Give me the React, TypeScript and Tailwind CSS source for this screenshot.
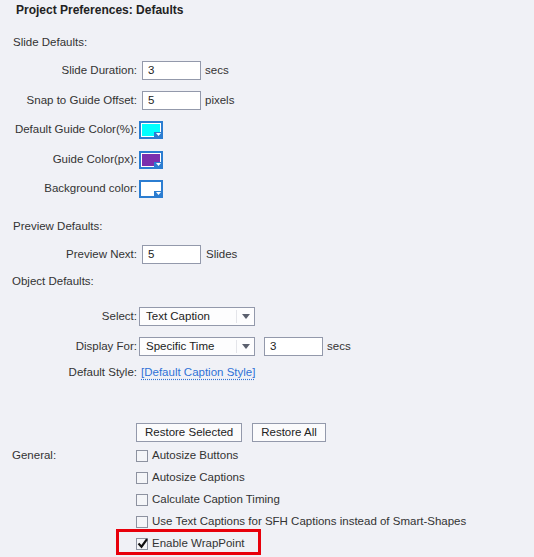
import React from "react";

const Label = ({ children }: { children: React.ReactNode }) => (
  <span className="w-[137px] shrink-0 whitespace-nowrap text-right">{children}</span>
);

const TextBox = ({ value, className = "" }: { value: string; className?: string }) => (
  <div
    className={`flex h-[19px] w-[59px] shrink-0 items-center border border-[#9399ab] bg-white pl-[5px] text-[#222] ${className}`}
  >
    {value}
  </div>
);

const Swatch = ({ fill }: { fill: string }) => (
  <div className="relative ml-[2px] h-[18px] w-[24px] border-2 border-[#2b7dd1] bg-white p-[1px]">
    <div className={`h-full w-full ${fill}`} />
    <div className="absolute -bottom-[1px] -right-[1px] flex h-[6px] w-[8px] items-center justify-center bg-[#2b7dd1]">
      <svg width="5" height="3" viewBox="0 0 5 3">
        <path d="M0 0h5L2.5 3z" fill="#fff" />
      </svg>
    </div>
  </div>
);

const Select = ({ value }: { value: string }) => (
  <div className="ml-[2px] flex h-[19px] w-[116px] shrink-0 items-center border border-[#9399ab] bg-[#fdfdfe] text-[#222]">
    <span className="flex-1 pl-[6px]">{value}</span>
    <span className="h-[13px] w-px bg-[#e4e5ea]" />
    <span className="flex w-[17px] justify-center">
      <svg width="8" height="5" viewBox="0 0 8 5">
        <path d="M0 0h8L4 5z" fill="#5b606e" />
      </svg>
    </span>
  </div>
);

const Button = ({ children }: { children: React.ReactNode }) => (
  <div className="flex h-[19px] items-center justify-center border border-[#9399ab] bg-[#fbfbfc] px-[8px] text-[#222]">
    {children}
  </div>
);

const Check = ({ checked = false }: { checked?: boolean }) => (
  <div className="relative h-[12px] w-[12px] shrink-0 border border-[#8d92a0] bg-[#f4f5f8]">
    {checked && (
      <svg className="absolute -left-[1px] -top-[2px]" width="13" height="13" viewBox="0 0 13 13">
        <path d="M2.5 6.5l3 3.2 5.5-7.5" fill="none" stroke="#111" strokeWidth="2.2" />
      </svg>
    )}
  </div>
);

const CheckRow = ({ label, checked = false }: { label: string; checked?: boolean }) => (
  <div className="flex h-[22px] items-center gap-[4px] whitespace-nowrap">
    <Check checked={checked} />
    <span>{label}</span>
  </div>
);

export default function App() {
  return (
    <div className="min-h-[557px] w-[534px] bg-[#f0f1f6] text-[11.5px] leading-none text-[#333] font-['Liberation_Sans',Arial,sans-serif]">
      <div className="flex h-[20px] items-center pl-[16px] text-[12px] font-bold text-[#222]">
        Project Preferences: Defaults
      </div>

      <div className="mt-[13px] flex h-[20px] items-center pl-[13px]">Slide Defaults:</div>

      <div className="mt-[8px] flex h-[19px] items-center">
        <Label>Slide Duration:</Label>
        <TextBox value="3" className="ml-[5px]" />
        <span className="ml-[4px]">secs</span>
      </div>

      <div className="mt-[11px] flex h-[19px] items-center">
        <Label>Snap to Guide Offset:</Label>
        <TextBox value="5" className="ml-[5px]" />
        <span className="ml-[4px]">pixels</span>
      </div>

      <div className="mt-[10px] flex h-[19px] items-center">
        <Label>Default Guide Color(%):</Label>
        <Swatch fill="bg-[#00ffff]" />
      </div>

      <div className="mt-[11px] flex h-[19px] items-center">
        <Label>Guide Color(px):</Label>
        <Swatch fill="bg-[#7b2fad]" />
      </div>

      <div className="mt-[10px] flex h-[19px] items-center">
        <Label>Background color:</Label>
        <Swatch fill="bg-white" />
      </div>

      <div className="mt-[19px] flex h-[20px] items-center pl-[13px]">Preview Defaults:</div>

      <div className="mt-[8px] flex h-[19px] items-center">
        <Label>Preview Next:</Label>
        <TextBox value="5" className="ml-[5px]" />
        <span className="ml-[5px]">Slides</span>
      </div>

      <div className="mt-[8px] flex h-[20px] items-center pl-[12px]">Object Defaults:</div>

      <div className="mt-[15px] flex h-[19px] items-center">
        <Label>Select:</Label>
        <Select value="Text Caption" />
      </div>

      <div className="mt-[11px] flex h-[19px] items-center">
        <Label>Display For:</Label>
        <Select value="Specific Time" />
        <TextBox value="3" className="ml-[9px]" />
        <span className="ml-[4px]">secs</span>
      </div>

      <div className="mt-[7px] flex h-[19px] items-center">
        <Label>Default Style:</Label>
        <span className="ml-[4px] text-[#2f72d6] underline decoration-dotted decoration-[#2f72d6] underline-offset-[3px]">
          [Default Caption Style]
        </span>
      </div>

      <div className="mt-[41px] flex h-[19px] items-center gap-[10px] pl-[136px]">
        <Button>Restore Selected</Button>
        <Button>Restore All</Button>
      </div>

      <div className="mt-[3px] flex">
        <div className="flex h-[22px] w-[136px] shrink-0 items-center pl-[12px]">General:</div>
        <div className="flex flex-col">
          <CheckRow label="Autosize Buttons" />
          <CheckRow label="Autosize Captions" />
          <CheckRow label="Calculate Caption Timing" />
          <CheckRow label="Use Text Captions for SFH Captions instead of Smart-Shapes" />
          <div className="relative">
            <CheckRow label="Enable WrapPoint" checked />
            <div className="pointer-events-none absolute -left-[20px] -top-[4px] h-[26px] w-[145px] border-[3px] border-[#e8000b]" />
          </div>
        </div>
      </div>
    </div>
  );
}
